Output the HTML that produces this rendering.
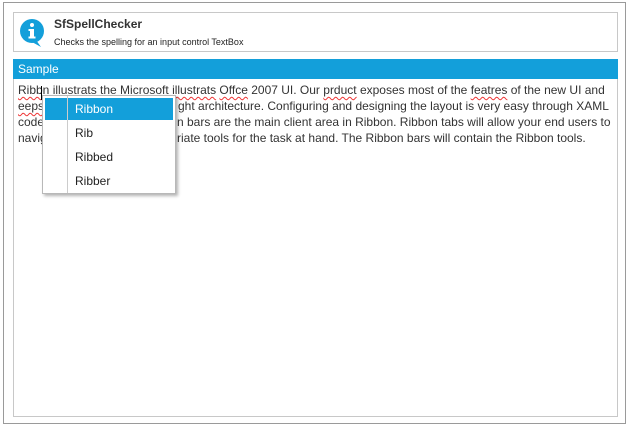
<!DOCTYPE html>
<html><head><style>
body{margin:0;width:631px;height:428px;background:#fff;font-family:"Liberation Sans",sans-serif;position:relative;overflow:hidden}
.frame{position:absolute;left:3px;top:2px;width:623px;height:422px;border:1px solid #9a9a9a;box-sizing:border-box}
.hdr{position:absolute;left:13px;top:12px;width:605px;height:40px;border:1px solid #c8c8c8;box-sizing:border-box}
.t1{position:absolute;left:40px;top:4px;font-size:12px;font-weight:bold;color:#333}
.t2{position:absolute;left:40px;top:24px;font-size:9px;color:#222}
.bar{position:absolute;left:13px;top:59px;width:605px;height:20px;background:#139fda;color:#fff;font-size:12px;line-height:20px;padding-left:5px;box-sizing:border-box}
.box{position:absolute;left:13px;top:79px;width:605px;height:338px;border:1px solid #c8c8c8;border-top:none;box-sizing:border-box}
.ln{position:absolute;font-size:12px;color:#333;white-space:nowrap;text-align:justify;text-align-last:justify}
.sq{text-decoration:underline wavy #e33;text-decoration-thickness:1px;text-underline-offset:2px}
.pop{position:absolute;left:42px;top:95px;width:134px;height:99px;background:#fff;border:1px solid #b8b8b8;box-sizing:border-box;box-shadow:2px 2px 3px rgba(0,0,0,.3)}
.sep{position:absolute;left:24px;top:0;width:1px;height:97px;background:#ccc}
.it{position:absolute;left:32px;font-size:12px;color:#222}
.hi{position:absolute;left:2px;top:2px;width:128px;height:22px;background:#139fda}
</style></head><body>
<div class="frame"></div>
<div class="hdr">
<svg style="position:absolute;left:5px;top:5px" width="26" height="30" viewBox="0 0 26 30"><circle cx="13" cy="13" r="12" fill="#139fda"/><path d="M17 22 L22 29 L13 24Z" fill="#139fda"/><circle cx="13" cy="7" r="2" fill="#fff"/><rect x="11" y="11" width="4" height="9" fill="#fff"/><rect x="9.5" y="11" width="5" height="2" fill="#fff"/><rect x="9.5" y="18.5" width="7" height="2" fill="#fff"/></svg>
<div class="t1">SfSpellChecker</div>
<div class="t2">Checks the spelling for an input control TextBox</div>
</div>
<div class="bar">Sample</div>
<div class="box"></div>
<div class="ln" style="top:83px;left:18px;width:586px"><span class="sq">Ribbn</span> illustrats the Microsoft <span class="sq">illustrats</span> <span class="sq">Offce</span> 2007 UI. Our <span class="sq">prduct</span> exposes most of the <span class="sq">featres</span> of the new UI and</div>
<div class="ln" style="top:99px;left:18px"><span class="sq">eeps</span></div>
<div class="ln" style="top:99px;left:178px;width:426px">ght architecture. Configuring and designing the layout is very easy through XAML</div>
<div class="ln" style="top:115px;left:18px">code</div>
<div class="ln" style="top:115px;left:177px;width:427px">n bars are the main client area in Ribbon. Ribbon tabs will allow your end users to</div>
<div class="ln" style="top:131px;left:18px">navig</div>
<div class="ln" style="top:131px;left:177px;width:405px">riate tools for the task at hand. The Ribbon bars will contain the Ribbon tools.</div>
<div style="position:absolute;left:41px;top:86px;width:1px;height:14px;background:#000"></div>
<div class="pop">
<div class="hi"></div><div class="sep"></div>
<div class="it" style="top:6px;color:#fff">Ribbon</div>
<div class="it" style="top:30px">Rib</div>
<div class="it" style="top:54px">Ribbed</div>
<div class="it" style="top:78px">Ribber</div>
</div>
</body></html>
